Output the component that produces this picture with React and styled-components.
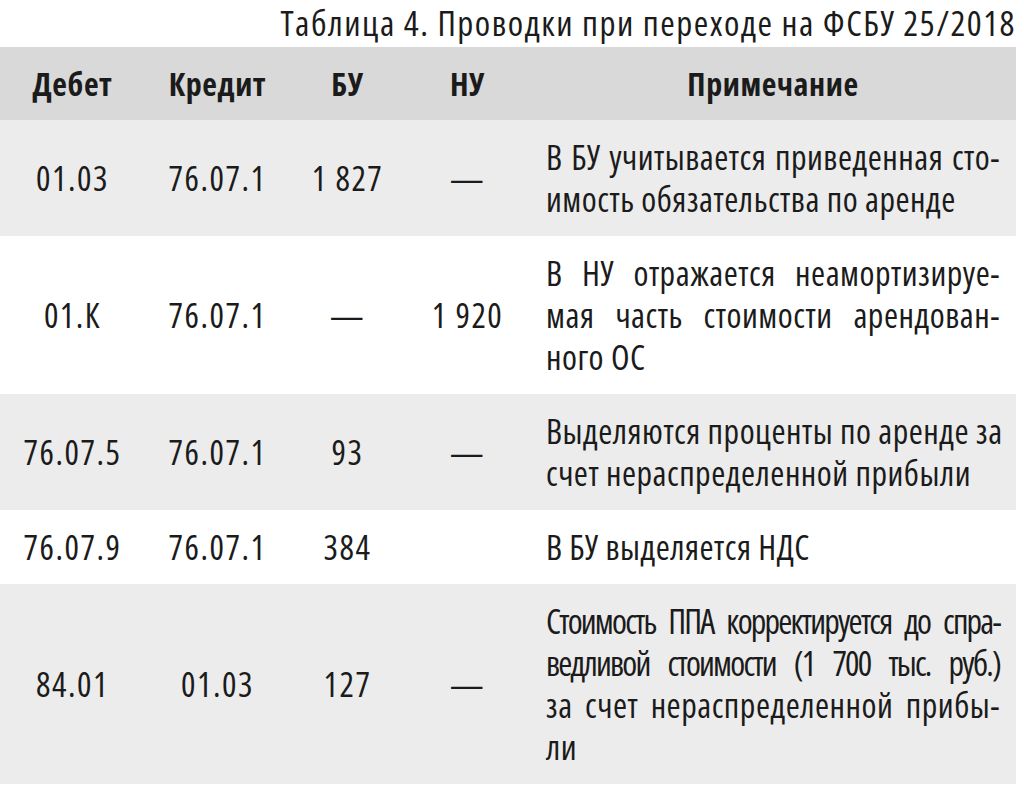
import React from 'react';
import styled, { createGlobalStyle } from 'styled-components';

const GlobalStyle = createGlobalStyle`
  html, body {
    margin: 0;
    padding: 0;
    background: #ffffff;
  }
  body {
    font-family: "Open Sans", "DejaVu Sans Condensed", sans-serif;
    font-stretch: 75%;
    color: #1b1b1b;
  }
`;

const rows = [
  {
    debit: '01.03',
    credit: '76.07.1',
    bu: '1 827',
    nu: '—',
    shade: true,
    note: ['В БУ учитывается приведенная сто-', 'имость обязательства по аренде'],
  },
  {
    debit: '01.К',
    credit: '76.07.1',
    bu: '—',
    nu: '1 920',
    note: ['В НУ отражается неамортизируе-', 'мая часть стоимости арендован-', 'ного ОС'],
  },
  {
    debit: '76.07.5',
    credit: '76.07.1',
    bu: '93',
    nu: '—',
    shade: true,
    note: ['Выделяются проценты по аренде за', 'счет нераспределенной прибыли'],
  },
  {
    debit: '76.07.9',
    credit: '76.07.1',
    bu: '384',
    nu: '',
    note: ['В БУ выделяется НДС'],
  },
  {
    debit: '84.01',
    credit: '01.03',
    bu: '127',
    nu: '—',
    shade: true,
    tight: [true, true, false, false],
    note: [
      'Стоимость ППА корректируется до спра-',
      'ведливой стоимости (1 700 тыс. руб.)',
      'за счет нераспределенной прибы-',
      'ли',
    ],
  },
];

const Page = styled.div`
  width: 1016px;
`;

const Title = styled.div`
  height: 47px;
  text-align: right;
  font-size: 35px;
  letter-spacing: 1.5px;
  line-height: 46px;
  box-sizing: border-box;
`;

const Row = styled.div`
  display: grid;
  grid-template-columns: 145px 145px 115px 125px minmax(0, 1fr);
  align-items: center;
  background: ${(p) => (p.$head ? '#d9d9d9' : p.$shade ? '#ececec' : '#ffffff')};
  min-height: ${(p) => (p.$head ? '73px' : '0')};
  padding: ${(p) => (p.$head ? '0' : '16px 0')};
  font-size: ${(p) => (p.$head ? '32px' : '34px')};
  font-weight: ${(p) => (p.$head ? 700 : 400)};
  letter-spacing: 0.6px;
`;

const Cell = styled.div`
  text-align: center;
  line-height: 42px;
  letter-spacing: ${(p) => (p.$head ? '0.6px' : '1.5px')};
`;

const Note = styled.div`
  padding: 0 16px;
  text-align: ${(p) => (p.$head ? 'center' : 'left')};
  line-height: 42px;
`;

const Line = styled.div`
  white-space: nowrap;
  text-align: ${(p) => (p.$last ? 'left' : 'justify')};
  text-align-last: ${(p) => (p.$last ? 'left' : 'justify')};
  letter-spacing: ${(p) => (p.$tight ? '-1.8px' : '0.5px')};
  word-spacing: ${(p) => (p.$tight ? '-4px' : '0')};
`;

export default function App() {
  return (
    <Page>
      <GlobalStyle />
      <Title>Таблица 4. Проводки при переходе на ФСБУ 25/2018</Title>
      <Row $head>
        <Cell $head>Дебет</Cell>
        <Cell $head>Кредит</Cell>
        <Cell $head>БУ</Cell>
        <Cell $head>НУ</Cell>
        <Note $head>Примечание</Note>
      </Row>
      {rows.map((r, i) => (
        <Row key={i} $shade={r.shade}>
          <Cell>{r.debit}</Cell>
          <Cell>{r.credit}</Cell>
          <Cell>{r.bu}</Cell>
          <Cell>{r.nu}</Cell>
          <Note>
            {r.note.map((line, j) => (
              <Line
                key={j}
                $last={j === r.note.length - 1}
                $tight={r.tight ? r.tight[j] : false}
              >
                {line}
              </Line>
            ))}
          </Note>
        </Row>
      ))}
    </Page>
  );
}
